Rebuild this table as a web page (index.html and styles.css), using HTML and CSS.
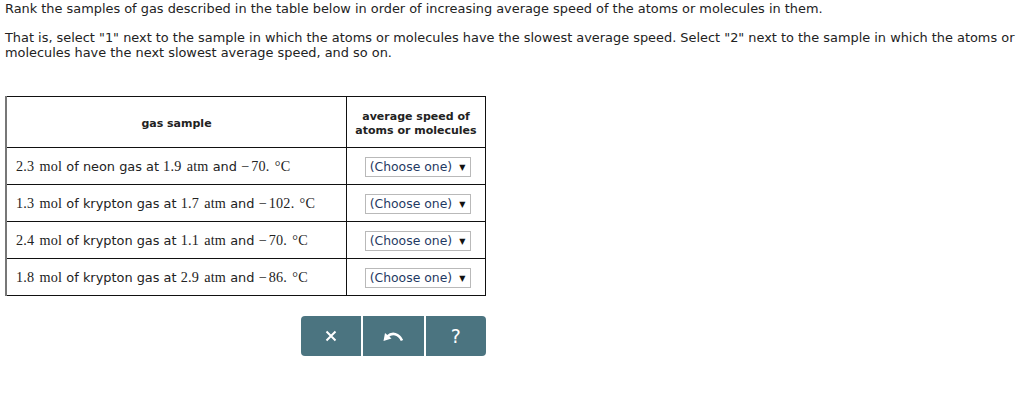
FILE: index.html
```html
<!DOCTYPE html>
<html>
<head>
<meta charset="utf-8">
<link rel="stylesheet" href="styles.css">
</head>
<body>
<div class="page">
  <p class="intro">Rank the samples of gas described in the table below in order of increasing average speed of the atoms or molecules in them.</p>
  <p class="instr">That is, select "1" next to the sample in which the atoms or molecules have the slowest average speed. Select "2" next to the sample in which the atoms or molecules have the next slowest average speed, and so on.</p>
  <table class="grid">
    <thead>
      <tr>
        <th class="col-sample">gas sample</th>
        <th class="col-speed">average speed of<br>atoms or molecules</th>
      </tr>
    </thead>
    <tbody>
      <tr>
        <td class="sample"><span class="m">2.3 mol</span> of neon gas at <span class="m">1.9 atm</span> and <span class="m"><span class="neg">−</span>70. °C</span></td>
        <td class="pick"><span class="sel">(Choose one)<span class="arr">▼</span></span></td>
      </tr>
      <tr>
        <td class="sample"><span class="m">1.3 mol</span> of krypton gas at <span class="m">1.7 atm</span> and <span class="m"><span class="neg">−</span>102. °C</span></td>
        <td class="pick"><span class="sel">(Choose one)<span class="arr">▼</span></span></td>
      </tr>
      <tr>
        <td class="sample"><span class="m">2.4 mol</span> of krypton gas at <span class="m">1.1 atm</span> and <span class="m"><span class="neg">−</span>70. °C</span></td>
        <td class="pick"><span class="sel">(Choose one)<span class="arr">▼</span></span></td>
      </tr>
      <tr>
        <td class="sample"><span class="m">1.8 mol</span> of krypton gas at <span class="m">2.9 atm</span> and <span class="m"><span class="neg">−</span>86. °C</span></td>
        <td class="pick"><span class="sel">(Choose one)<span class="arr">▼</span></span></td>
      </tr>
    </tbody>
  </table>
  <div class="actions">
    <div class="bar">
      <button class="btn" aria-label="clear">
        <svg width="12" height="12" viewBox="0 0 12 12"><path d="M1.5 1.5 L10.5 10.5 M10.5 1.5 L1.5 10.5" stroke="#fff" stroke-width="2" fill="none"/></svg>
      </button>
      <button class="btn" aria-label="undo">
        <svg width="22" height="12" viewBox="0 0 22 12"><path d="M20 10.5 C17 3.5 10 2 5.5 6.5" stroke="#fff" stroke-width="2.6" fill="none"/><path d="M1.5 11 L3 3 L9.5 8.5 Z" fill="#fff"/></svg>
      </button>
      <button class="btn q">?</button>
    </div>
  </div>
</div>
</body>
</html>
```

FILE: styles.css
```css
html, body {
  margin: 0;
  padding: 0;
  background: #fff;
}
.page {
  padding: 0 0 0 5px;
  font-family: "DejaVu Sans", Verdana, sans-serif;
  font-size: 12.9px;
  color: #222;
}
.intro {
  margin: 1px 0 0 0;
  line-height: 15px;
}
.instr {
  margin: 14px 0 0 0;
  line-height: 15px;
  width: 1016px;
}
.grid {
  margin-top: 36px;
  border-collapse: collapse;
  width: 481px;
}
.grid th, .grid td {
  border: 1px solid #111;
}
.grid tr > :first-child {
  border-left: 2px solid #777;
}
.grid th {
  height: 47px;
  font-weight: bold;
  font-size: 11px;
  line-height: 14px;
  text-align: center;
  padding: 3px 0 0 0;
}
.col-sample {
  width: 339px;
}
.grid td {
  height: 35px;
  padding: 1px 0 0 0;
}
.sample {
  padding-left: 9px !important;
  font-size: 12.9px;
}
.m {
  font-family: "Liberation Serif", "Times New Roman", serif;
  font-size: 14.2px;
  letter-spacing: 0.2px;
  word-spacing: 1.5px;
}
.neg {
  margin-right: 2px;
}
.pick {
  text-align: center;
  padding-left: 4px !important;
}
.sel {
  display: inline-block;
  border: 1px solid #b9b9b9;
  height: 18px;
  line-height: 18px;
  padding: 0 5px 0 4px;
  font-size: 12.4px;
  color: #1f3a63;
}
.arr {
  color: #111;
  font-size: 8px;
  margin-left: 7px;
  vertical-align: 1px;
}
.actions {
  margin-top: 20px;
  padding-left: 296px;
}
.bar {
  display: flex;
  width: 185px;
  height: 40px;
  background: #4b7480;
  border-radius: 4px;
  overflow: hidden;
}
.btn {
  flex: 1;
  border: 0;
  background: transparent;
  color: #fff;
  display: flex;
  align-items: center;
  justify-content: center;
  padding: 0;
  margin: 0;
}
.btn + .btn {
  border-left: 2px solid #fff;
}
.q {
  font-family: "DejaVu Sans", Verdana, sans-serif;
  font-size: 19px;
}
```
